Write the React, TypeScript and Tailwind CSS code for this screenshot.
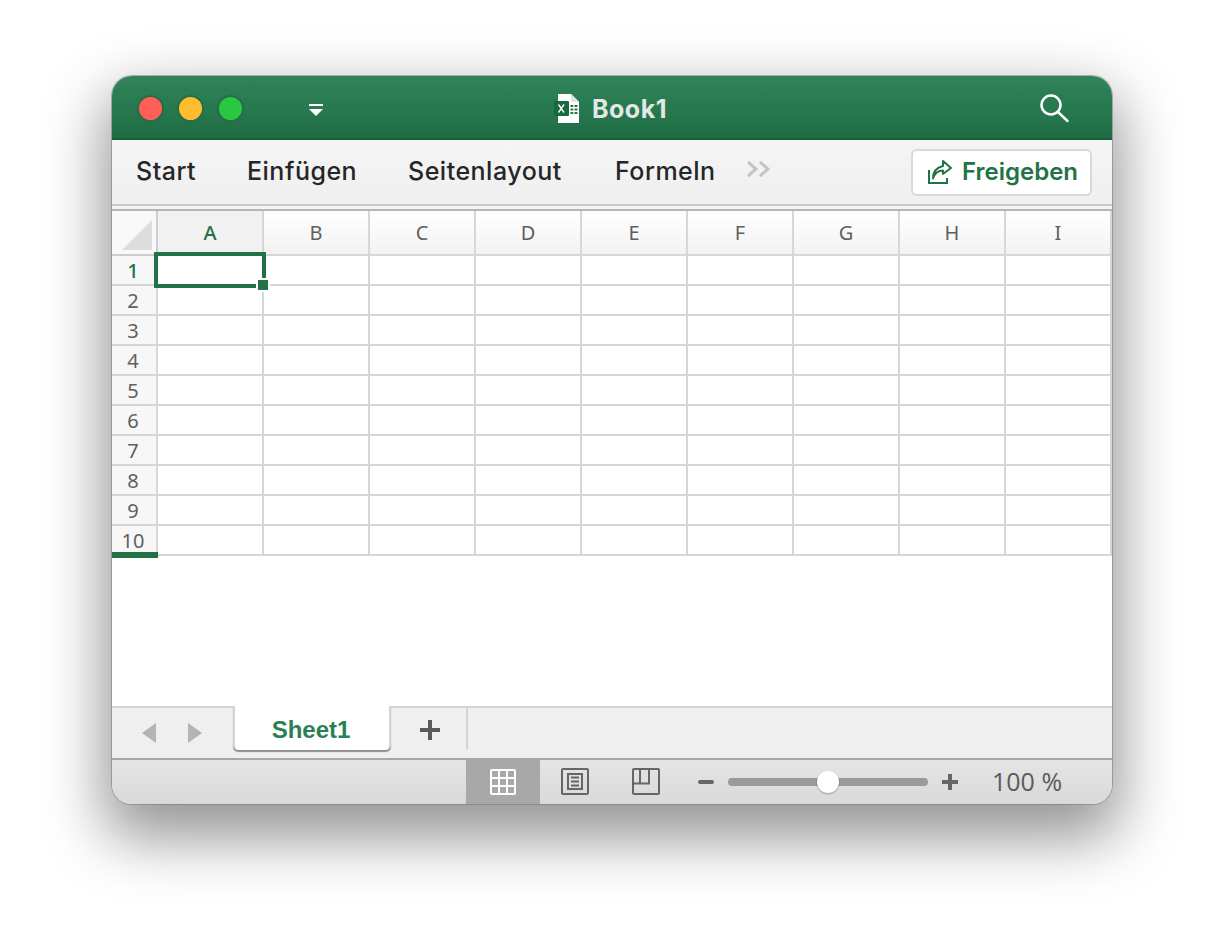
const COLS = ["A", "B", "C", "D", "E", "F", "G", "H", "I"];
const ROWS = [1, 2, 3, 4, 5, 6, 7, 8, 9, 10];
const TABS = [
  { label: "Start", cls: "w-[111px]" },
  { label: "Einfügen", cls: "w-[161px]" },
  { label: "Seitenlayout", cls: "w-[207px]" },
  { label: "Formeln", cls: "w-[132px]" },
];

function ExcelFile() {
  return (
    <svg width="26" height="30" viewBox="0 0 26 30">
      <path d="M4 0h13l8 8v21H4z" fill="#fff" />
      <path d="M17 0l8 8h-8z" fill="#dfe6e2" />
      <rect x="0" y="7" width="15" height="15" rx="1" fill="#17693f" />
      <path d="M4.500 10.500l5.500 8M10 10.500l-5.500 8" stroke="#fff" strokeWidth="1.400" />
      <path d="M16.500 11h7v2h-7zM16.500 14.500h7v2h-7zM16.500 18h7v2h-7z" fill="#1f7a4b" />
      <path d="M19.300 10.500h1.200v10h-1.200z" fill="#fff" />
    </svg>
  );
}

function SearchIcon() {
  return (
    <svg width="30" height="30" viewBox="0 0 30 30" fill="none" stroke="#fff" strokeWidth="2.500">
      <circle cx="11" cy="11" r="9.500" />
      <path d="M17.500 17.500L27.500 27" strokeLinecap="round" />
    </svg>
  );
}

function ShareIcon() {
  return (
    <svg width="26" height="26" viewBox="0 0 26 26" fill="none" stroke="#217346" strokeWidth="2">
      <path d="M2 11v13h18v-5" />
      <path d="M16 2l8 7-8 6v-3.500c-5 0-8 2-10 8 0-7 4-11 10-12.500z" strokeLinejoin="round" />
    </svg>
  );
}

function GridIcon() {
  return (
    <svg width="28" height="28" viewBox="0 0 28 28" fill="none" stroke="#fff" strokeWidth="2">
      <rect x="2" y="2" width="24" height="24" rx="1" />
      <path d="M10 2v24M18 2v24M2 10h24M2 18h24" />
    </svg>
  );
}

function PageIcon() {
  return (
    <svg width="28" height="28" viewBox="0 0 28 28" fill="none" stroke="#666" strokeWidth="2">
      <rect x="1" y="1" width="26" height="25" rx="1" />
      <rect x="7" y="6" width="14" height="15" />
      <path d="M10 9.500h8M10 13.500h8M10 17.500h8" />
    </svg>
  );
}

function BreakIcon() {
  return (
    <svg width="28" height="28" viewBox="0 0 28 28" fill="none" stroke="#666" strokeWidth="2">
      <rect x="1" y="1" width="26" height="25" rx="1" />
      <path d="M8 1v14.500h9V1M8 15.500H1" />
    </svg>
  );
}

export default function App() {
  return (
    <div className="min-h-[952px] bg-white pl-[112px] pt-[76px] font-['Inter',sans-serif]">
      <div className="w-[1000px] h-[728px] rounded-[20px] overflow-hidden flex flex-col bg-white shadow-[0_0_0_1px_rgba(120,120,120,0.55),0_26px_60px_8px_rgba(0,0,0,0.42)]">
        {/* title bar */}
        <div className="h-[64px] shrink-0 flex items-center bg-gradient-to-b from-[#30835a] via-[#277a4f] to-[#206b44] border-b-2 border-[#1c5c3a]">
          <div className="flex items-center gap-[13px] pl-[25px] mt-[3px]">
            <span className="w-[27px] h-[27px] rounded-full bg-[#ff5f57] border-2 border-[#2a6b48]" />
            <span className="w-[27px] h-[27px] rounded-full bg-[#febc2e] border-2 border-[#2a6b48]" />
            <span className="w-[27px] h-[27px] rounded-full bg-[#28c840] border-2 border-[#2a6b48]" />
          </div>
          <div className="ml-[65px] mt-[6px] flex flex-col items-center gap-[3px]">
            <span className="w-[14px] h-[2px] bg-white" />
            <span className="w-0 h-0 border-x-[7px] border-x-transparent border-t-[7px] border-t-white" />
          </div>
          <div className="ml-[231px] mt-[4px] flex items-center gap-[12px]">
            <ExcelFile />
            <span className="pt-[1px] text-[25px] font-bold tracking-[0.5px] text-[#e3e8e5]">Book1</span>
          </div>
          <div className="ml-auto mr-[42px] mt-[3px]">
            <SearchIcon />
          </div>
        </div>

        {/* ribbon */}
        <div className="h-[66px] shrink-0 flex items-center bg-gradient-to-b from-[#f5f5f5] to-[#efefef] border-b-2 border-[#c8c8c8] pl-[24px]">
          {TABS.map((t) => (
            <span key={t.label} className={`${t.cls} text-[25px] font-medium tracking-[0.5px] text-[#262626]`}>{t.label}</span>
          ))}
          <svg width="26" height="18" viewBox="0 0 26 18" fill="none" stroke="#c4c4c4" strokeWidth="3" className="-mt-[6px] -ml-[1px]">
            <path d="M2 2l8 7-8 7M14 2l8 7-8 7" />
          </svg>
          <button className="ml-[139px] w-[181px] h-[47px] rounded-[6px] bg-white border-2 border-[#d9d9d9] flex items-center justify-center gap-[9px] pl-[2px] text-[24px] font-semibold text-[#217346]">
            <ShareIcon />
            Freigeben
          </button>
        </div>
        <div className="h-[5px] shrink-0 bg-[#f3f3f3] border-b-2 border-[#b5b5b5]" />

        {/* sheet */}
        <div className="flex-1 relative overflow-hidden bg-white font-['Noto_Sans',sans-serif]">
          <div className="flex h-[45px]">
            <div className="w-[46px] shrink-0 flex items-center justify-center border-r-2 border-b-2 border-[#cdcdcd] bg-[#f8f8f8]">
              <span className="w-0 h-0 border-l-[30px] border-l-transparent border-b-[30px] border-b-[#dcdcdc] ml-[6px] mt-[5px]" />
            </div>
            {COLS.map((c) => (
              <div
                key={c}
                className={`w-[106px] shrink-0 flex items-center justify-center border-r-2 border-b-2 border-[#d6d6d6] text-[20px] ${c === "A" ? "bg-[#f1f1f1] text-[#217346] font-medium" : "bg-gradient-to-b from-white to-[#f2f2f2] text-[#5f5f5f]"}`}
              >
                {c}
              </div>
            ))}
          </div>
          {ROWS.map((r) => (
            <div key={r} className="flex h-[30px]">
              <div className={`w-[46px] shrink-0 flex items-center justify-center border-r-2 border-b-2 border-[#d6d6d6] bg-[#f7f7f7] pr-[2px] pt-[1px] text-[20px] ${r === 1 ? "text-[#217346] font-medium" : "text-[#5f5f5f]"}`}>
                {r}
              </div>
              {COLS.map((c) => (
                <div key={c} className="w-[106px] shrink-0 border-r-2 border-b-2 border-[#d6d6d6]" />
              ))}
            </div>
          ))}
          {/* selected cell */}
          <div className="absolute left-[42px] top-[41px] w-[112px] h-[36px] border-[4px] border-[#217346]" />
          <div className="absolute left-[144px] top-[67px] w-[14px] h-[14px] bg-[#217346] border-2 border-white" />
          <div className="absolute left-0 top-[341px] w-[46px] h-[6px] bg-[#217346]" />
        </div>

        {/* sheet tabs */}
        <div className="h-[52px] shrink-0 flex items-start bg-[#efefef] border-t-2 border-[#d3d3d3]">
          <div className="flex items-center gap-[32px] pl-[30px] w-[121px] h-[50px]">
            <span className="w-0 h-0 border-y-[10px] border-y-transparent border-r-[14px] border-r-[#b4b4b4]" />
            <span className="w-0 h-0 border-y-[10px] border-y-transparent border-l-[14px] border-l-[#b4b4b4]" />
          </div>
          <div className="w-[158px] h-[44px] -mt-[2px] bg-white border-x-2 border-[#d3d3d3] rounded-b-[5px] flex items-center justify-center pt-[3px] pr-[2px] text-[24px] font-bold text-[#2a7f53] font-['Liberation_Sans',sans-serif] shadow-[0_2px_1px_0_rgba(0,0,0,0.4)]">
            Sheet1
          </div>
          <div className="w-[75px] h-[44px] flex items-center justify-center pl-[3px]">
            <svg width="20" height="20" viewBox="0 0 20 20" fill="#5a5a5a"><path d="M8 0h4v8h8v4h-8v8H8v-8H0V8h8z" /></svg>
          </div>
          <div className="w-[2px] h-[41px] bg-[#d3d3d3]" />
        </div>

        {/* status bar */}
        <div className="h-[46px] shrink-0 flex items-center bg-gradient-to-b from-[#e5e5e5] to-[#d9d9d9] border-t-2 border-[#a8a8a8]">
          <div className="ml-[354px] w-[74px] h-full flex items-center justify-center bg-[#a8a8a8]">
            <GridIcon />
          </div>
          <div className="ml-[21px] flex items-center gap-[43px]">
            <PageIcon />
            <BreakIcon />
          </div>
          <span className="ml-[38px] w-[16px] h-[4px] rounded-[2px] bg-[#666]" />
          <div className="ml-[14px] w-[200px] h-[8px] rounded-full bg-[#9a9a9a] relative">
            <span className="absolute left-[89px] -top-[7px] w-[22px] h-[22px] rounded-full bg-white shadow-[0_1px_2px_rgba(0,0,0,0.3)]" />
          </div>
          <svg width="16" height="16" viewBox="0 0 16 16" fill="#666" className="ml-[14px]"><path d="M6 0h4v6h6v4h-6v6H6v-6H0V6h6z" /></svg>
          <span className="ml-[34px] text-[25px] text-[#5a5a5a] font-['Open_Sans',sans-serif]">100 %</span>
        </div>
      </div>
    </div>
  );
}
